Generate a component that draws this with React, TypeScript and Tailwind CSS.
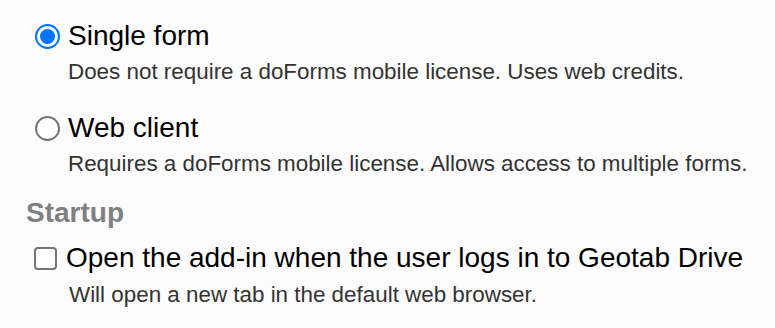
import React from "react";

function Radio({ checked }: { checked?: boolean }) {
  return checked ? (
    <span className="flex h-[25px] w-[25px] shrink-0 items-center justify-center rounded-full border-[2.5px] border-[#0075ff] bg-white">
      <span className="h-[15px] w-[15px] rounded-full bg-[#0075ff]" />
    </span>
  ) : (
    <span className="h-[25px] w-[25px] shrink-0 rounded-full border-[2px] border-[#767676] bg-white" />
  );
}

function Option({ label, hint, checked }: { label: string; hint: string; checked?: boolean }) {
  return (
    <div className="pl-[35px]">
      <label className="flex items-center gap-[8px]">
        <Radio checked={checked} />
        <span className="text-[28px] leading-[32px] text-black">{label}</span>
      </label>
      <p className="mt-[6px] pl-[33px] text-[22.4px] leading-[28px] text-[#333]">{hint}</p>
    </div>
  );
}

export default function App() {
  return (
    <div className="h-[328px] w-[775px] bg-[#fcfcfc] pt-[20px] font-['Liberation_Sans',Arial,sans-serif]">
      <Option
        checked
        label="Single form"
        hint="Does not require a doForms mobile license. Uses web credits."
      />
      <div className="mt-[26px]">
        <Option
          label="Web client"
          hint="Requires a doForms mobile license. Allows access to multiple forms."
        />
      </div>
      <h3 className="mt-[19px] pl-[26px] text-[28px] font-bold leading-[32px] text-[#808080]">Startup</h3>
      <div className="mt-[13px] pl-[34px]">
        <label className="flex items-center gap-[9px]">
          <span className="h-[23px] w-[23px] shrink-0 rounded-[4px] border-[2px] border-[#767676] bg-white" />
          <span className="text-[28px] leading-[32px] text-black">
            Open the add-in when the user logs in to Geotab Drive
          </span>
        </label>
        <p className="mt-[7px] pl-[35px] text-[22.4px] leading-[28px] text-[#333]">
          Will open a new tab in the default web browser.
        </p>
      </div>
    </div>
  );
}
